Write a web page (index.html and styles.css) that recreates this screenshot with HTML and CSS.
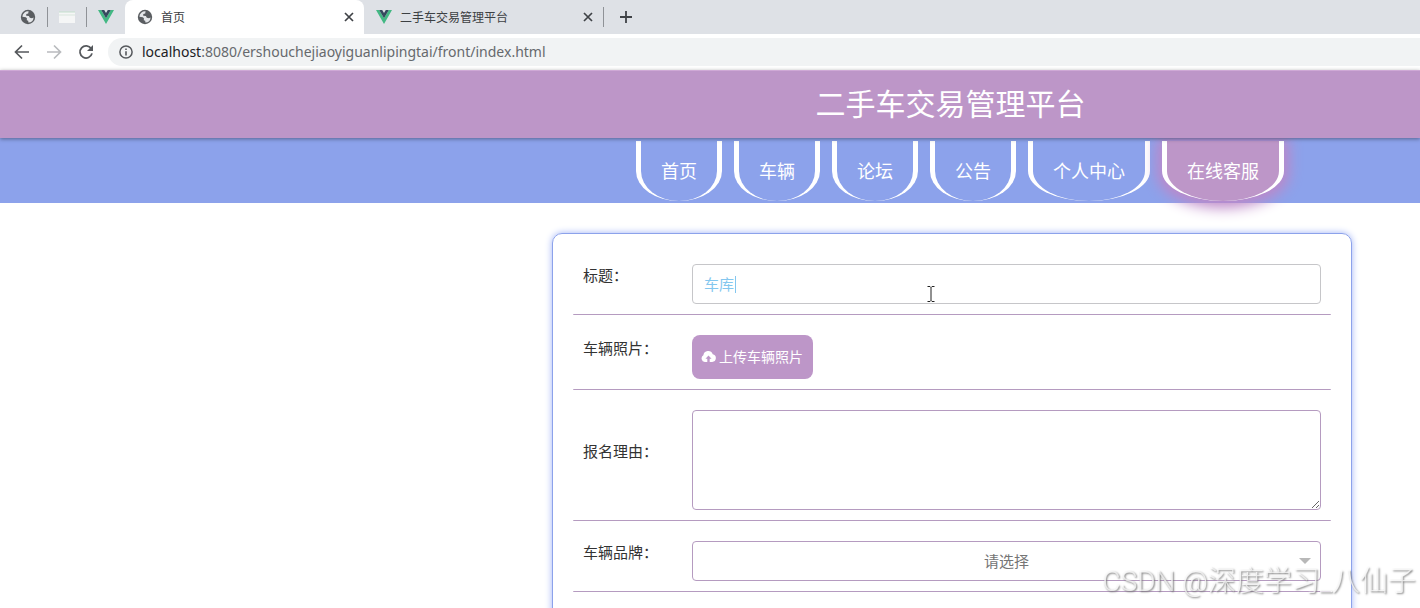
FILE: index.html
```html
<!DOCTYPE html>
<html lang="zh-CN">
<head>
<meta charset="utf-8">
<title>首页</title>
<link rel="stylesheet" href="styles.css">
</head>
<body>
<svg class="defs" aria-hidden="true">
  <symbol id="globe" viewBox="0 0 16 16">
    <circle cx="8" cy="8" r="7.2" fill="#5a5d61"/>
    <path d="M8.6 2.2 8.2 4.4 6.3 5 6.2 6.8 8.9 7 9.8 8.8 12 9.2 13.6 8.4A5.7 5.7 0 0 1 8.4 13.6L8.2 11.8 6.8 11.2 6.9 9.3 5.8 8.2 2.4 7.8A5.7 5.7 0 0 1 8.6 2.2Z" fill="#e4e6e9"/>
  </symbol>
  <symbol id="vue" viewBox="0 0 16 14">
    <path d="M0 0H3.2L8 8.3 12.8 0H16L8 14Z" fill="#42b883"/>
    <path d="M3.2 0H6.2L8 3.1 9.8 0H12.8L8 8.3Z" fill="#35495e"/>
  </symbol>
  <symbol id="cross" viewBox="0 0 10 10">
    <path d="M1 1 9 9M9 1 1 9" stroke="#3f4246" stroke-width="1.7" fill="none"/>
  </symbol>
</svg>

<div class="tabs">
  <a class="pin" href="#" aria-label="固定页 1"><svg class="ico"><use href="#globe"/></svg></a>
  <a class="pin" href="#" aria-label="固定页 2"><svg class="ico" viewBox="0 0 16 16"><path d="M0 3H16V14H0Z" fill="#f5f6f6"/><path d="M0 3H16" stroke="#c5dfcd"/><path d="M0 6H16" stroke="#d9e6dd"/></svg></a>
  <a class="pin last" href="#" aria-label="固定页 3"><svg class="vue"><use href="#vue"/></svg></a>
  <div class="tab active">
    <svg class="ico"><use href="#globe"/></svg><span class="tab-name">首页</span>
    <button class="close" aria-label="关闭"><svg class="x"><use href="#cross"/></svg></button>
  </div>
  <div class="tab">
    <svg class="vue"><use href="#vue"/></svg><span class="tab-name">二手车交易管理平台</span>
    <button class="close" aria-label="关闭"><svg class="x"><use href="#cross"/></svg></button>
  </div>
  <button class="new-tab" aria-label="新标签页"><svg class="plus" viewBox="0 0 12 12"><path d="M6 0V12M0 6H12" stroke="#3f4246" stroke-width="1.8"/></svg></button>
</div>

<div class="toolbar">
  <button class="tool" aria-label="后退"><svg class="ico" viewBox="0 0 16 16"><path d="M15 8H2M8 1.5 1.5 8 8 14.5" fill="none" stroke="#55585c" stroke-width="1.7"/></svg></button>
  <button class="tool" aria-label="前进"><svg class="ico" viewBox="0 0 16 16"><path d="M1 8H14M8 1.5 14.5 8 8 14.5" fill="none" stroke="#b9bbbe" stroke-width="1.7"/></svg></button>
  <button class="tool" aria-label="刷新"><svg class="ico" viewBox="0 0 16 16"><path d="M13.2 4.6A6.1 6.1 0 1 0 14 9.4" fill="none" stroke="#55585c" stroke-width="1.8"/><path d="M15 1V7H9Z" fill="#55585c"/></svg></button>
  <div class="address">
    <svg class="info" viewBox="0 0 14 14"><circle cx="7" cy="7" r="6.1" fill="none" stroke="#55585c" stroke-width="1.5"/><path d="M7 6.2V10.4M7 3.4V5" stroke="#55585c" stroke-width="1.6"/></svg>
    <span class="url"><span class="host">localhost</span>:8080/ershouchejiaoyiguanlipingtai/front/index.html</span>
  </div>
</div>

<header class="banner"><h1 class="title">二手车交易管理平台</h1></header>
<nav class="nav">
  <a class="link" href="#">首页</a>
  <a class="link" href="#">车辆</a>
  <a class="link" href="#">论坛</a>
  <a class="link" href="#">公告</a>
  <a class="link" href="#">个人中心</a>
  <a class="link current" href="#">在线客服</a>
</nav>

<main class="main">
  <form class="card">
    <div class="row">
      <label class="label" for="name">标题：</label>
      <div class="field">
        <input class="control focused" id="name" type="text" value="车库">
        <span class="caret"></span>
        <svg class="pointer" viewBox="0 0 8 16"><path d="M.5 .5H3L4 1.5 5 .5H7.5M4 1.5V14.5M.5 15.5H3L4 14.5 5 15.5H7.5" fill="none" stroke="#222"/></svg>
      </div>
    </div>
    <div class="row">
      <span class="label photo">车辆照片：</span>
      <button class="upload" type="button"><svg class="cloud" viewBox="0 0 16 12"><path d="M4 12A4 4 0 0 1 2.4 4.6 5.3 5.3 0 0 1 12.6 3.5 4.3 4.3 0 0 1 12 12H9.3V8.5H11.3L8 4.8 4.7 8.5H6.7V12Z" fill="#fff"/></svg>上传车辆照片</button>
    </div>
    <div class="row">
      <label class="label tall" for="reason">报名理由：</label>
      <div class="field"><textarea class="control area" id="reason"></textarea></div>
    </div>
    <div class="row">
      <label class="label" for="brand">车辆品牌：</label>
      <div class="field">
        <select class="control select" id="brand"><option>请选择</option></select>
        <svg class="arrow" viewBox="0 0 12 6"><path d="M0 0H12L6 6Z" fill="#b8b8b8"/></svg>
      </div>
    </div>
  </form>
</main>
<div class="watermark">CSDN @深度学习_八仙子</div>
</body>
</html>
```
FILE: styles.css
```css
* { box-sizing: border-box; }

body {
  margin: 0;
  height: 100vh;
  overflow: hidden;
  background: #fff;
  color: #333;
  font-family: "Noto Sans", "Noto Sans CJK SC", sans-serif;
  font-size: 15px;
}

button { border: 0; padding: 0; background: none; font: inherit; }
svg { display: block; flex: none; }
a { color: inherit; text-decoration: none; }
.defs { position: absolute; width: 0; height: 0; }

/* Browser tabs */
.tabs {
  display: flex;
  height: 34px;
  padding-left: 9px;
  background: #dee1e6;
  font-size: 12px;
}
.pin {
  display: flex;
  align-items: center;
  justify-content: center;
  width: 39px;
  height: 20px;
  margin-top: 7px;
  border-right: 1px solid #8f9297;
}
.pin.last { width: 38px; border: 0; }
.ico { width: 16px; height: 16px; }
.vue { width: 16px; height: 14px; }
.tab {
  display: flex;
  align-items: center;
  gap: 8px;
  width: 239px;
  padding: 0 10px 0 12px;
  color: #3c4043;
}
.tab.active { background: #fff; border-radius: 8px 8px 0 0; }
.tab-name { flex: 1; white-space: nowrap; }
.x { width: 10px; height: 10px; }
.new-tab {
  height: 20px;
  margin-top: 7px;
  padding-left: 16px;
  border-left: 1px solid #8f9297;
}
.plus { width: 12px; height: 12px; }

/* Browser toolbar */
.toolbar {
  display: flex;
  align-items: center;
  gap: 16px;
  height: 36px;
  padding-left: 14px;
}
.address {
  flex: 1;
  display: flex;
  align-items: center;
  gap: 9px;
  height: 28px;
  margin-left: -2px;
  padding-left: 11px;
  border-radius: 14px 0 0 14px;
  background: #f1f3f4;
}
.info { width: 14px; height: 14px; }
.url { color: #66696d; font-size: 14px; line-height: 20px; padding-bottom: 1px; white-space: nowrap; }
.host { color: #202124; }

/* Site header */
.banner {
  position: relative;
  z-index: 1;
  display: flex;
  justify-content: center;
  height: 68px;
  padding: 13px 2px 0 34%;
  border-top: 1px solid #cfa9d6;
  background: #bd96c8;
  box-shadow: 0 1px 4px rgba(0, 0, 0, 0.4);
}
.title { margin: 0; color: #fff; font-size: 30px; font-weight: 400; line-height: 40px; }
.nav {
  display: flex;
  justify-content: center;
  gap: 12px;
  height: 65px;
  padding: 3px 0 2px 35.2%;
  background: #8ca2eb;
}
.link {
  padding: 0 20px;
  border: solid #fff;
  border-width: 0 5px;
  border-radius: 0 0 50% 50%;
  color: #fff;
  font-size: 18px;
  line-height: 60px;
  white-space: nowrap;
}
.link.current { background: #bd96c8; box-shadow: 0 2px 14px 5px #bd88c8; }

/* Form */
.main { padding: 30px 0 0 34.1%; }
.card {
  max-width: 800px;
  margin: 0 auto;
  padding: 20px;
  border: 1px solid #8ca2eb;
  border-radius: 10px;
  box-shadow: 0 0 7px #9fb2f5;
}
.row {
  display: flex;
  align-items: flex-start;
  margin-bottom: 10px;
  padding: 10px;
  border-bottom: 1px solid #b59bc0;
  border-radius: 1px;
}
.label { width: 109px; line-height: 22px; }
.label.photo { line-height: 26px; }
.label.tall { line-height: 82px; }
.field { position: relative; flex: 1; }
.control {
  display: block;
  width: 100%;
  height: 40px;
  margin: 0;
  padding: 0 11px 2px;
  border: 1px solid #b59bc0;
  border-radius: 4px;
  outline: 0;
  background: #fff;
  color: #757575;
  font: inherit;
}
.focused { border-color: #c6c6c9; color: #84c7ef; }
.area { height: 100px; resize: vertical; }
.select { padding-bottom: 0; appearance: none; text-align-last: center; }
.caret { position: absolute; left: 43px; top: 12px; width: 1px; height: 17px; background: #84c7ef; }
.pointer { position: absolute; left: 235px; top: 22px; width: 8px; height: 16px; }
.arrow { position: absolute; right: 10px; top: 17px; width: 12px; height: 6px; }
.upload {
  display: flex;
  align-items: center;
  gap: 3px;
  height: 44px;
  padding: 0 10px 2px 9px;
  border-radius: 8px;
  background: #bd96c8;
  color: #fff;
  font-size: 14px;
}
.cloud { width: 15px; height: 11px; }

.watermark {
  position: fixed;
  right: 4px;
  bottom: 6px;
  color: rgba(255, 255, 255, 0.7);
  font-family: Roboto, "Noto Sans CJK SC", sans-serif;
  font-size: 28px;
  font-weight: 300;
  line-height: 40px;
  text-shadow: 1px 1px 2px #777;
}
```
